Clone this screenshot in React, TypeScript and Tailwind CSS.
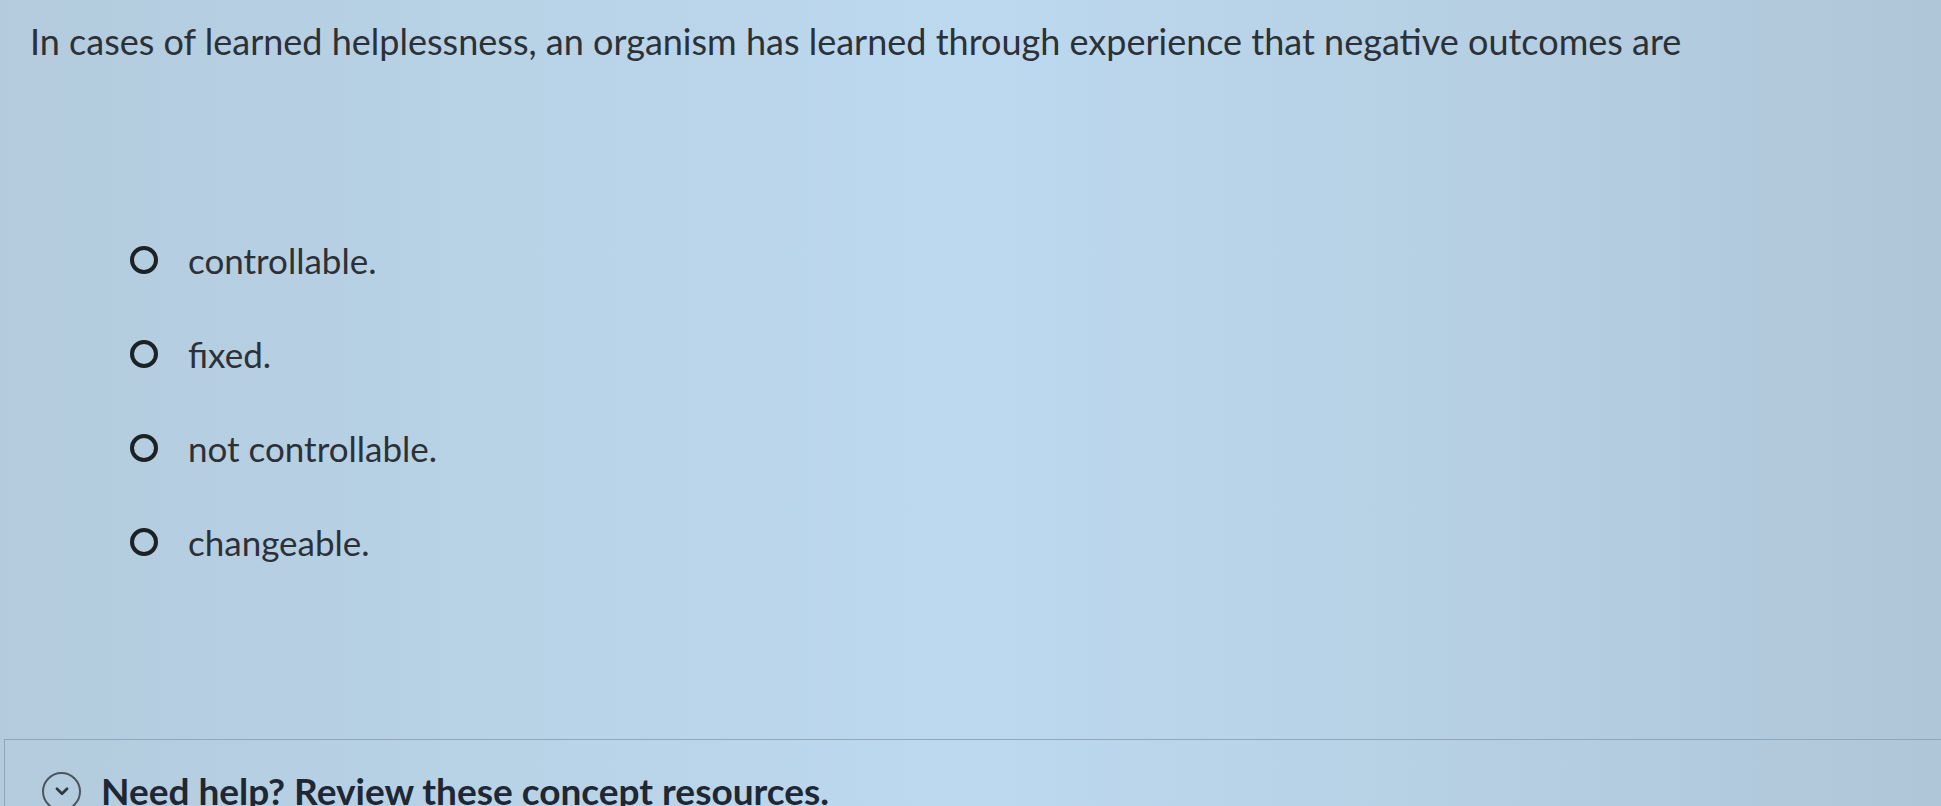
import React from 'react'

const OPTIONS = ['controllable.', 'fixed.', 'not controllable.', 'changeable.']

function Radio() {
    return <span className="inline-block size-[28px] flex-shrink-0 rounded-full border-[4px] border-[#1c2126]" />
}

function ChevronCircle() {
    return (
        <span className="flex size-[39px] flex-shrink-0 items-center justify-center rounded-full border-[2.5px] border-[#4a5561]">
            <svg viewBox="0 0 16 16" className="size-[18px]" fill="none" stroke="#2e3945" strokeWidth="2.4" strokeLinecap="round" strokeLinejoin="round">
                <path d="M3.5 6 8 10.5 12.5 6" />
            </svg>
        </span>
    )
}

export default function App() {
    return (
        <div className="h-[806px] w-full overflow-hidden bg-gradient-to-r from-[#b3cbdd] via-[#bdd9ef] to-[#afc6d8] font-['Lato','Open_Sans',sans-serif] text-[#2c3137]">
            <p className="m-0 pl-[30px] pt-[19px] text-[36px] leading-[44px]">
                In cases of learned helplessness, an organism has learned through experience that negative outcomes are
            </p>

            <ul className="m-0 mt-[175px] flex list-none flex-col gap-[50px] p-0 pl-[130px]">
                {OPTIONS.map((option) => (
                    <li key={option} className="flex h-[44px] items-center gap-[30px] text-[35px]">
                        <Radio />
                        <span>{option}</span>
                    </li>
                ))}
            </ul>

            <div className="ml-[4px] mt-[175px] border-l border-t border-[#8fa7ba] pl-[37px] pt-[31px]">
                <div className="flex h-[40px] items-center gap-[20px]">
                    <ChevronCircle />
                    <span className="text-[37px] font-bold leading-[40px] text-[#1e2733]">Need help? Review these concept resources.</span>
                </div>
            </div>
        </div>
    )
}
